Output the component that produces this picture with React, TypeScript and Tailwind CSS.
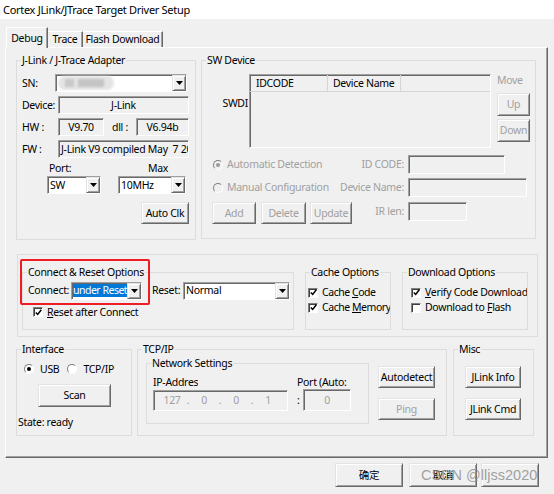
import React from "react";

type P = { children?: React.ReactNode; className?: string };

const sunken =
  "border border-t-[#a0a0a0] border-l-[#a0a0a0] border-r-white border-b-white shadow-[inset_1px_1px_0_#696969]";
const raised =
  "border border-t-[#e3e3e3] border-l-[#e3e3e3] border-r-[#696969] border-b-[#696969] shadow-[inset_1px_1px_0_#ffffff,inset_-1px_-1px_0_#a0a0a0]";

function Group({ title, className = "", children }: P & { title?: string }) {
  return (
    <fieldset className={`min-w-0 shrink-0 border border-[#dcdcdc] ${className}`}>
      {title && (
        <legend className="ml-[4px] whitespace-nowrap px-[1px] leading-[13px]">{title}</legend>
      )}
      {children}
    </fieldset>
  );
}

function Btn({ children, className = "", off }: P & { off?: boolean }) {
  return (
    <div
      className={`flex shrink-0 items-center justify-center whitespace-nowrap bg-[#f0f0f0] ${raised} ${
        off ? "text-[#a0a0a0]" : "text-black"
      } ${className}`}
    >
      {children}
    </div>
  );
}

function Box({ children, className = "" }: P) {
  return (
    <div className={`flex shrink-0 items-center overflow-hidden whitespace-pre bg-[#f0f0f0] ${sunken} ${className}`}>
      {children}
    </div>
  );
}

function Arrow() {
  return (
    <svg width="7" height="4" viewBox="0 0 7 4">
      <path d="M0 0h7L3.5 4z" fill="#000" />
    </svg>
  );
}

function Combo({ children, className = "" }: P) {
  return (
    <div className={`flex h-[18px] shrink-0 bg-white ${sunken} ${className}`}>
      <div className="flex min-w-0 flex-1 items-center overflow-hidden whitespace-nowrap pl-[2px]">{children}</div>
      <div className={`flex w-[14px] items-center justify-center bg-[#f0f0f0] ${raised}`}>
        <Arrow />
      </div>
    </div>
  );
}

function Check({ on }: { on?: boolean }) {
  return (
    <span className="flex h-[10px] w-[10px] shrink-0 items-center justify-center border border-t-[#808080] border-l-[#808080] border-r-white border-b-white bg-white shadow-[inset_1px_1px_0_#404040]">
      {on && (
        <svg width="7" height="7" viewBox="0 0 7 7">
          <path d="M0.8 3.4l1.9 2 3.6-4.6" fill="none" stroke="#000" strokeWidth="1.5" />
        </svg>
      )}
    </span>
  );
}

function Radio({ on, off }: { on?: boolean; off?: boolean }) {
  return (
    <span
      className={`flex h-[10px] w-[10px] shrink-0 items-center justify-center rounded-full border border-t-[#808080] border-l-[#808080] border-r-white border-b-white ${
        off ? "bg-[#f0f0f0]" : "bg-white"
      }`}
    >
      {on && <span className={`h-[4px] w-[4px] rounded-full ${off ? "bg-[#9a9a9a]" : "bg-black"}`} />}
    </span>
  );
}

export default function App() {
  return (
    <div className="relative flex h-[494px] w-[554px] flex-col overflow-hidden bg-[#f0f0f0] font-['Noto_Sans','Noto_Sans_CJK_SC',sans-serif] text-[10.5px] leading-[13px] tracking-[-0.3px] text-black">
      {/* title bar */}
      <div className="h-[19px] bg-white pl-[3px] pt-[3px] text-[11px] leading-[13px]">
        Cortex JLink/JTrace Target Driver Setup
      </div>

      {/* tabs */}
      <div className="mt-[8px] flex h-[20px] items-end pl-[6px]">
        <div className="relative z-10 -mb-px flex h-[21px] w-[42px] items-center justify-center border border-b-0 border-t-white border-l-white border-r-[#696969] bg-[#f0f0f0] shadow-[inset_-1px_0_0_#a0a0a0]">
          Debug
        </div>
        <div className="flex h-[16px] w-[35px] items-center justify-center border border-b-0 border-l-0 border-t-white border-r-[#696969] shadow-[inset_-1px_0_0_#a0a0a0]">
          Trace
        </div>
        <div className="flex h-[16px] w-[80px] items-center justify-center border border-b-0 border-l-0 border-t-white border-r-[#696969] shadow-[inset_-1px_0_0_#a0a0a0]">
          Flash Download
        </div>
      </div>

      {/* tab panel */}
      <div className="ml-[5px] flex h-[411px] w-[543px] flex-col border border-t-white border-l-white border-r-[#696969] border-b-[#696969] pl-[10px] pt-[6px] shadow-[inset_-1px_-1px_0_#a0a0a0]">
        <div className="flex gap-[5px]">
          <Group title="J-Link / J-Trace Adapter" className="h-[186px] w-[180px]">
            <div className="flex flex-col pl-[5px] pt-[7px]">
              <div className="flex h-[18px] items-center">
                <span className="w-[33px]">SN:</span>
                <Combo className="w-[132px]">
                  <div className="flex h-[14px] w-[56px] items-center gap-[4px] rounded-full bg-[#e4e4e4] pl-[7px] blur-[1px]">
                    <span className="h-[8px] w-[9px] bg-[#c9c9c9]" />
                    <span className="h-[8px] w-[26px] bg-[#c4c4c4]" />
                  </div>
                </Combo>
              </div>
              <div className="mt-[4px] flex h-[18px] items-center">
                <span className="w-[36px]">Device:</span>
                <Box className="h-[18px] w-[131px] justify-center">J-Link</Box>
              </div>
              <div className="mt-[4px] flex h-[18px] items-center">
                <span className="w-[36px]">HW :</span>
                <Box className="h-[18px] w-[46px] justify-center">V9.70</Box>
                <span className="ml-[8px] w-[24px]">dll :</span>
                <Box className="h-[18px] w-[53px] justify-center">V6.94b</Box>
              </div>
              <div className="mt-[4px] flex h-[18px] items-center">
                <span className="w-[36px]">FW :</span>
                <Box className="h-[18px] w-[131px] pl-[2px]">J-Link V9 compiled May  7 2020 16:33:19</Box>
              </div>
              <div className="mt-[4px] flex h-[13px]">
                <span className="ml-[27px] w-[99px]">Port:</span>
                <span>Max</span>
              </div>
              <div className="mt-[1px] flex">
                <Combo className="ml-[25px] w-[54px]">SW</Combo>
                <Combo className="ml-[17px] w-[68px]">10MHz</Combo>
              </div>
              <Btn className="ml-[119px] mt-[8px] h-[22px] w-[48px]">Auto Clk</Btn>
            </div>
          </Group>

          <Group title="SW Device" className="h-[185px] w-[335px]">
            <div className="flex flex-col pt-[7px]">
              <div className="flex h-[74px]">
                <div className="w-[47px] pr-[1px] pt-[23px] text-right">SWDI</div>
                <div className={`flex h-[74px] w-[242px] flex-col bg-[#f0f0f0] ${sunken}`}>
                  <div className="flex h-[17px] border-b border-[#d5d5d5]">
                    <div className="w-[78px] border-r border-[#d5d5d5] pl-[6px] leading-[16px]">IDCODE</div>
                    <div className="w-[73px] border-r border-[#d5d5d5] pl-[5px] leading-[16px]">Device Name</div>
                  </div>
                </div>
                <div className="ml-[6px] flex w-[33px] flex-col">
                  <span className="h-[14px] text-[#a0a0a0]">Move</span>
                  <Btn off className="mt-[5px] h-[23px] w-[33px]">Up</Btn>
                  <Btn off className="mt-[3px] h-[23px] w-[33px]">Down</Btn>
                </div>
              </div>

              <div className="mt-[7px] flex h-[19px] items-center whitespace-nowrap text-[#a0a0a0]">
                <div className="flex w-[138px] items-center gap-[4px] pl-[11px]">
                  <Radio on off />
                  <span>Automatic Detection</span>
                </div>
                <span className="w-[64px] text-right">ID CODE:</span>
                <Box className="ml-[4px] h-[19px] w-[97px]" />
              </div>
              <div className="mt-[4px] flex h-[19px] items-center whitespace-nowrap text-[#a0a0a0]">
                <div className="flex w-[138px] items-center gap-[4px] pl-[11px]">
                  <Radio off />
                  <span>Manual Configuration</span>
                </div>
                <span className="w-[64px] text-right">Device Name:</span>
                <Box className="ml-[4px] h-[19px] w-[119px]" />
              </div>
              <div className="mt-[5px] flex h-[22px] items-start whitespace-nowrap text-[#a0a0a0]">
                <div className="flex w-[150px] pl-[10px]">
                  <Btn off className="h-[22px] w-[44px]">Add</Btn>
                  <Btn off className="ml-[5px] h-[22px] w-[45px]">Delete</Btn>
                  <Btn off className="ml-[4px] h-[22px] w-[42px]">Update</Btn>
                </div>
                <span className="w-[52px] pt-[3px] text-right">IR len:</span>
                <Box className="ml-[4px] h-[19px] w-[59px]" />
              </div>
            </div>
          </Group>
        </div>

        {/* connect / cache / download */}
        <div className="ml-[1px] mt-[14px] flex h-[83px] w-[521px] border border-[#dcdcdc] pl-[4px] pt-[11px]">
          <Group title="Connect & Reset Options" className="h-[64px] w-[272px]">
            <div className="flex flex-col pl-[5px] pt-[3px]">
              <div className="flex h-[17px] items-center">
                <span className="w-[43px]">Connect:</span>
                <Combo className="h-[17px] w-[71px]">
                  <span className="-ml-px bg-[#0078d7] leading-[13px] tracking-[-0.5px] text-white">under Reset</span>
                </Combo>
                <span className="ml-[10px] w-[31px]">Reset:</span>
                <Combo className="h-[17px] w-[107px]">Normal</Combo>
              </div>
              <div className="mt-[7px] flex h-[12px] items-center gap-[4px] pl-[5px]">
                <Check on />
                <span>
                  <u>R</u>eset after Connect
                </span>
              </div>
            </div>
          </Group>
          <Group title="Cache Options" className="ml-[11px] h-[64px] w-[86px]">
            <div className="flex flex-col gap-[2px] overflow-hidden whitespace-nowrap pl-[2px] pt-[7px] tracking-[-0.45px]">
              <div className="flex h-[13px] items-center gap-[4px]">
                <Check on />
                <span>
                  Cache <u>C</u>ode
                </span>
              </div>
              <div className="flex h-[13px] items-center gap-[4px]">
                <Check on />
                <span>
                  Cache <u>M</u>emory
                </span>
              </div>
            </div>
          </Group>
          <Group title="Download Options" className="ml-[11px] h-[64px] w-[126px]">
            <div className="flex flex-col gap-[2px] overflow-hidden whitespace-nowrap pl-[8px] pt-[7px]">
              <div className="flex h-[13px] items-center gap-[4px]">
                <Check on />
                <span>
                  <u>V</u>erify Code Download
                </span>
              </div>
              <div className="flex h-[13px] items-center gap-[4px]">
                <Check />
                <span>
                  Download to <u>F</u>lash
                </span>
              </div>
            </div>
          </Group>
        </div>

        {/* interface / tcp / misc */}
        <div className="mt-[6px] flex">
          <Group title="Interface" className="h-[93px] w-[116px]">
            <div className="flex flex-col pt-[7px]">
              <div className="flex h-[12px] items-center pl-[7px]">
                <Radio on />
                <span className="ml-[6px]">USB</span>
                <span className="ml-[8px]">
                  <Radio />
                </span>
                <span className="ml-[6px]">TCP/IP</span>
              </div>
              <Btn className="ml-[21px] mt-[9px] h-[23px] w-[73px]">Scan</Btn>
              <span className="mt-[9px] pl-[1px]">State: ready</span>
            </div>
          </Group>

          <Group title="TCP/IP" className="ml-[5px] h-[93px] w-[310px]">
            <div className="flex">
              <Group title="Network Settings" className="ml-[8px] mt-[1px] h-[67px] w-[223px]">
                <div className="flex pl-[6px]">
                  <div className="flex w-[135px] flex-col">
                    <span className="mt-[6px] h-[13px] w-[45px] overflow-hidden whitespace-nowrap">IP-Address</span>
                    <Box className="mt-[1px] h-[21px] w-[135px] pl-[8px] text-[#a0a0a0]">
                      <span className="w-[20px] text-center">127</span>
                      <span className="w-[12px] text-center">.</span>
                      <span className="w-[20px] text-center">0</span>
                      <span className="w-[12px] text-center">.</span>
                      <span className="w-[20px] text-center">0</span>
                      <span className="w-[12px] text-center">.</span>
                      <span className="w-[20px] text-center">1</span>
                    </Box>
                  </div>
                  <div className="ml-[9px] flex flex-col">
                    <span className="mt-[6px] h-[13px] w-[56px] overflow-hidden whitespace-nowrap">Port (Auto:</span>
                    <div className="flex items-center">
                      <span className="w-[6px]">:</span>
                      <Box className="h-[22px] w-[48px] justify-center text-[#a0a0a0]">0</Box>
                    </div>
                  </div>
                </div>
              </Group>
              <div className="ml-[9px] flex flex-col gap-[10px] pt-[10px]">
                <Btn className="h-[22px] w-[57px]">Autodetect</Btn>
                <Btn off className="h-[22px] w-[57px]">Ping</Btn>
              </div>
            </div>
          </Group>

          <Group title="Misc" className="ml-[6px] h-[93px] w-[81px]">
            <div className="flex flex-col gap-[10px] pl-[11px] pt-[10px]">
              <Btn className="h-[22px] w-[56px]">JLink Info</Btn>
              <Btn className="h-[22px] w-[56px]">JLink Cmd</Btn>
            </div>
          </Group>
        </div>
      </div>

      {/* dialog buttons */}
      <div className="mt-[5px] flex justify-end pr-[15px]">
        <Btn className="h-[24px] w-[68px]">确定</Btn>
        <Btn className="ml-[6px] h-[24px] w-[68px]">取消</Btn>
        <Btn className="ml-[4px] h-[24px] w-[58px]" />
      </div>

      {/* annotation + watermark overlays */}
      <div className="absolute left-[20px] top-[259px] h-[46px] w-[130px] rounded-[2px] border-2 border-[#ee1d24]" />
      <div className="absolute left-[421px] top-[466px] font-['Liberation_Sans',sans-serif] text-[14.5px] leading-[18px] tracking-normal text-[#8a8a8a]/80">
        CSDN @lljss2020
      </div>
    </div>
  );
}
